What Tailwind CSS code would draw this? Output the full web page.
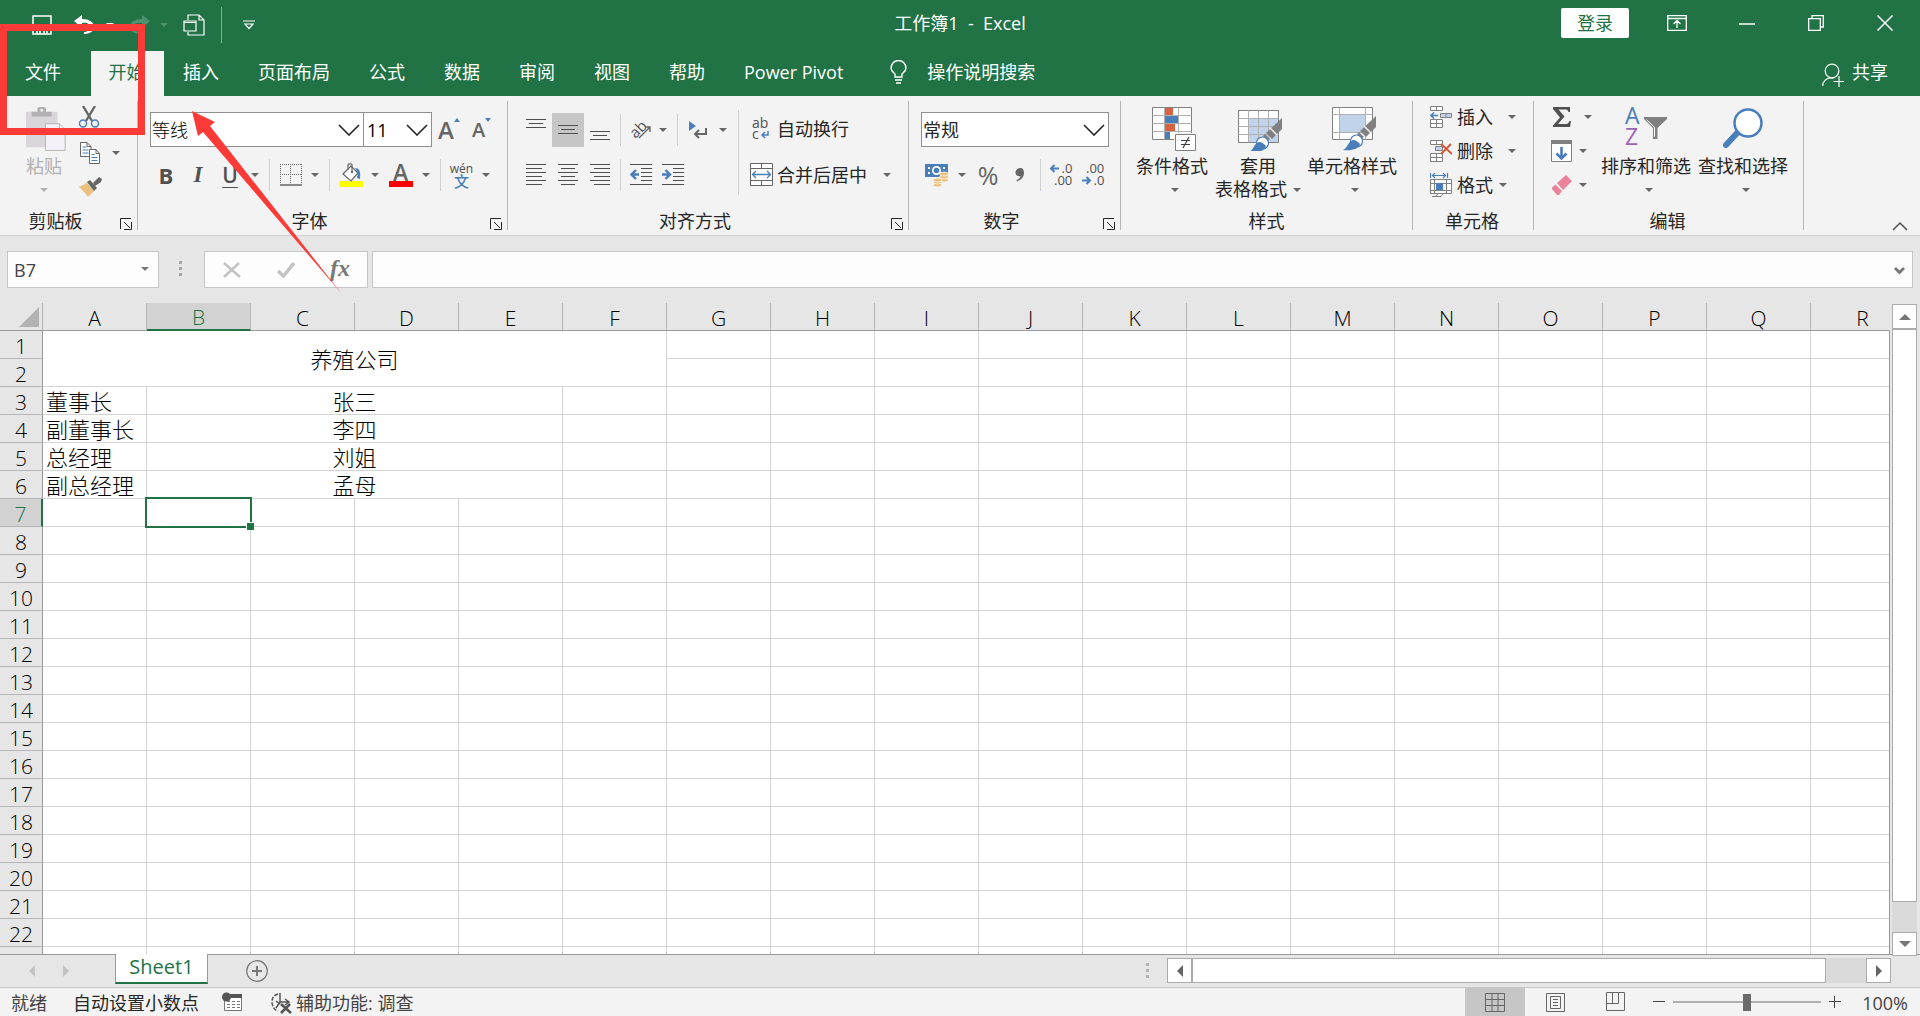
<!DOCTYPE html>
<html lang="zh-CN">
<head>
  <meta charset="UTF-8" />
  <meta name="viewport" content="width=device-width, initial-scale=1.0"/>
  <title>工作簿1 - Excel</title>
  <script src="https://cdn.jsdelivr.net/npm/@tailwindcss/browser@4"></script>
  <style>
    body {
      font-family: 'Open Sans', 'Noto Sans CJK SC', sans-serif;
    }
  </style>
</head>
<body class="relative h-screen flex flex-col overflow-hidden bg-[#e6e6e6] text-[18px] leading-6 text-[#262626]">

  <!-- Shared icons -->
  <svg class="hidden">
    <symbol id="caret" viewBox="0 0 8 4"><path d="M0 0h8L4 4z" fill="currentColor"/></symbol>
    <symbol id="chevron" viewBox="0 0 22 12"><path d="M1 1l10 10L21 1" fill="none" stroke="currentColor" stroke-width="1.6"/></symbol>
    <symbol id="launcher" viewBox="0 0 12 12"><path d="M.5 11V.5H11M4 4l6 6M11.500 4v7.500H4" fill="none" stroke="currentColor"/></symbol>
    <symbol id="brush" viewBox="0 0 33 36">
      <path d="M33 1v11L23 22l-6-6z" fill="#808080"/>
      <path d="M21 11l7 7" stroke="#f3f3f3" stroke-width="1.500"/>
      <path d="M16 17l5 5-2 2-5-5z" fill="#808080"/>
      <circle cx="13.500" cy="26" r="6" fill="#fff" stroke="#4a7ebb" stroke-width="1.200"/>
      <path d="M0 35c5-2 5-9 10-10 3 0 5 2 7 4-1 5-8 7-17 6z" fill="#4a7ebb"/>
    </symbol>
  </svg>

  <!-- Title bar -->
  <header class="relative h-[51px] shrink-0 flex items-start bg-[#217346] text-white">
    <div class="flex items-center h-[51px] pb-[1px] pl-8">
      <button aria-label="保存"><svg class="w-5 h-5" viewBox="0 0 20 20" fill="none" stroke="#fff" stroke-width="1.500"><path d="M1 1h18v18H1zM5 19v-4h10v4"/><path d="M8 16v3M12 16v3"/></svg></button>
      <button aria-label="撤消" class="ml-[22px]"><svg class="w-5 h-5" viewBox="0 0 20 20"><path d="M8 0L0 6l8 7V8c5-1 8 1 8 4 0 3-3 5-6 5v2c6 0 10-3 10-7 0-5-5-8-12-8z" fill="#fff"/></svg></button>
      <button aria-label="撤消选项" class="ml-3"><svg class="w-2 h-1"><use href="#caret"/></svg></button>
      <button aria-label="恢复" class="ml-4 text-[#4e9170]"><svg class="w-5 h-5" viewBox="0 0 20 20"><path d="M12 0l8 6-8 7V8c-5-1-8 1-8 4 0 3 3 5 6 5v2c-6 0-10-3-10-7 0-5 5-8 12-8z" fill="currentColor"/></svg></button>
      <button aria-label="恢复选项" class="ml-2.5 text-[#4e9170]"><svg class="w-2 h-1"><use href="#caret"/></svg></button>
      <button aria-label="切换窗口" class="ml-[15px]"><svg class="w-[22px] h-[22px]" viewBox="0 0 22 22" fill="none" stroke="#fff" stroke-width="1.200"><path d="M5 6V1h11l5 5v15H5v-3M16 1v5h5"/><path d="M1 7h12v10H1zM1 8.500h12"/></svg></button>
      <span class="w-px h-9 ml-4 bg-[#7fb096]"></span>
      <button aria-label="自定义快速访问工具栏" class="ml-[21px]"><svg class="w-3 h-[10px]" viewBox="0 0 12 10" fill="none" stroke="#fff" stroke-width="1.200"><path d="M0 1h12M2 4l4 4.500L10 4z"/></svg></button>
    </div>
    <h1 class="absolute inset-x-0 top-[11px] text-center whitespace-pre pointer-events-none">工作簿1  -  Excel</h1>
    <div class="ml-auto flex items-center h-[46px] pr-[27px]">
      <button class="w-[68px] h-[30px] rounded-xs bg-white text-[#217346]">登录</button>
      <button aria-label="功能区显示选项" class="ml-[38px]"><svg class="w-5 h-4" viewBox="0 0 20 16" fill="none" stroke="#fff" stroke-width="1.300"><path d="M.7.700h18.600v14.600H.7zM1 3.500h18M10 13V6M6.500 9L10 5.500 13.500 9"/></svg></button>
      <button aria-label="最小化" class="ml-[52px]"><svg class="w-4 h-4" viewBox="0 0 16 16" stroke="#fff" stroke-width="1.500"><path d="M0 9h16"/></svg></button>
      <button aria-label="向下还原" class="ml-[53px]"><svg class="w-4 h-4" viewBox="0 0 16 16" fill="none" stroke="#fff" stroke-width="1.300"><path d="M.7 3.700h11.600v11.600H.7zM4 3.500V.700h11.300V12H12.500"/></svg></button>
      <button aria-label="关闭" class="ml-[53px]"><svg class="w-4 h-4" viewBox="0 0 16 16" stroke="#fff" stroke-width="1.500"><path d="M.5.500l15 15M15.500.500l-15 15"/></svg></button>
    </div>
  </header>

  <!-- Ribbon tabs -->
  <nav class="h-[45px] shrink-0 flex bg-[#217346] text-white whitespace-nowrap">
    <button class="w-[91px] pl-[25px] pb-1 text-left">文件</button>
    <button class="w-[73px] pb-1 pr-0.5 bg-[#f3f3f3] text-[#217346]">开始</button>
    <div class="flex gap-px pb-1">
      <button class="px-[19px]">插入</button>
      <button class="px-[19px]">页面布局</button>
      <button class="px-[19px]">公式</button>
      <button class="px-[19px]">数据</button>
      <button class="px-[19px]">审阅</button>
      <button class="px-[19px]">视图</button>
      <button class="px-[19px]">帮助</button>
      <button class="px-[19px]">Power Pivot</button>
      <button class="pl-[27px] pr-6 flex items-center gap-5">
        <svg class="w-[17px] h-6" viewBox="0 0 17 24" fill="none" stroke="#fff" stroke-width="1.400"><path d="M5 17v-3C3 12 1 11 1 8a7.500 7.500 0 0 1 15 0c0 3-2 4-4 6v3zM5 20h7M6 23h5"/></svg>
        操作说明搜索
      </button>
    </div>
    <button class="ml-auto pr-8 pb-1 flex items-center gap-2">
      <svg class="w-[22px] h-6 mt-1.5" viewBox="0 0 22 24" fill="none" stroke="#fff" stroke-width="1.200"><circle cx="10" cy="8" r="6.800"/><path d="M.7 23c0-5 4-8 8-8h3M17 13v11M11.500 18.500H22"/></svg>
      共享
    </button>
  </nav>

  <!-- Ribbon -->
  <div class="h-[140px] shrink-0 flex bg-[#f3f3f3] border-b border-[#d0d0d0] whitespace-nowrap">

    <!-- Clipboard -->
    <section class="w-[137px] shrink-0 flex flex-col">
      <div class="flex-1 flex">
        <button class="w-12 ml-5 pt-[11px] flex flex-col items-center text-[#b1b1b1]">
          <svg class="w-[42px] h-[44px] ml-1 shrink-0" viewBox="0 0 42 46"><path d="M0 5h33v37H0z" fill="#d9d6d9"/><path d="M6 5h6V1l2-1h5l2 1v4h6v5H6z" fill="#b3b0b3"/><circle cx="16.500" cy="3.500" r="1.500" fill="#f3f3f3"/><path d="M20.500 17.500H35l6 6v22H20.500z" fill="#f5f1f8" stroke="#b5b2b5"/><path d="M35 17.500v6h6" fill="none" stroke="#b5b2b5"/></svg>
          <span class="mt-1 leading-[23px]">粘贴</span>
          <svg class="w-2 h-1 mt-2.5"><use href="#caret"/></svg>
        </button>
        <div class="pt-1 pl-2.5 flex flex-col text-[#666]">
          <button aria-label="剪切" class="h-[34px]"><svg class="w-[22px] h-[22px]" viewBox="0 0 22 22" fill="none"><path d="M5 0l9 15M17 0L8 15" stroke="#666" stroke-width="2.400"/><circle cx="5" cy="17.500" r="3.500" stroke="#4a7ebb" stroke-width="1.500"/><circle cx="17" cy="17.500" r="3.500" stroke="#4a7ebb" stroke-width="1.500"/></svg></button>
          <button aria-label="复制" class="h-[34px] pt-1 pl-0.5 flex items-center gap-3"><svg class="w-5 h-[22px]" viewBox="0 0 20 22" stroke="#666"><path d="M.5.500H7l4 4v10H.5z" fill="#fff"/><path d="M2.500 5h4M2.500 8h6M2.500 11h6" stroke="#4a7ebb"/><path d="M9.500 7.500H16l3.500 4v10h-10z" fill="#fff"/><path d="M7 .5v4h4M16 7.500v4h3.500" fill="none"/><path d="M11.500 12.500h3M11.500 15.500h6M11.500 18.500h6" stroke="#4a7ebb"/></svg><svg class="w-2 h-1"><use href="#caret"/></svg></button>
          <button aria-label="格式刷" class="h-[34px] pt-1"><svg class="w-6 h-5" viewBox="0 0 24 20"><path d="M1 10l8-4 7 8-6 6C8 16 4 13 1 10z" fill="#e9c07c"/><path d="M9 5l3-2 7 8-3 3z" fill="#666"/><path d="M15 6l6-6 3 2-1 3-6 4z" fill="#666"/></svg></button>
        </div>
      </div>
      <div class="relative h-[26px] text-center pr-[26px]">剪贴板<button aria-label="剪贴板设置" class="absolute right-[5px] top-[9px]"><svg class="w-3 h-3"><use href="#launcher"/></svg></button></div>
    </section>
    <span class="w-px my-[5px] shrink-0 bg-[#b5b5b5]"></span>

    <!-- Font -->
    <section class="w-[369px] shrink-0 flex flex-col">
      <div class="flex-1 pl-3 pt-4 flex flex-col gap-3 text-[#666]">
        <div class="h-[35px] -mb-px flex">
          <div class="relative w-[214px]">
            <select aria-label="字体" class="appearance-none w-full h-full pl-px bg-white border border-[#8f8f8f] text-black font-light"><option>等线</option></select>
            <svg class="absolute right-1 top-3 w-[22px] h-3 text-[#262626] pointer-events-none"><use href="#chevron"/></svg>
          </div>
          <div class="relative w-[69px] -ml-px">
            <select aria-label="字号" class="appearance-none w-full h-full pl-[3px] bg-white border border-[#8f8f8f] text-black"><option>11</option></select>
            <svg class="absolute right-1 top-3 w-[22px] h-3 text-[#262626] pointer-events-none"><use href="#chevron"/></svg>
          </div>
          <button aria-label="增大字号" class="ml-1.5 flex items-start text-[24px] leading-9 font-semibold">A<svg class="w-1.5 h-1 mt-1.5" viewBox="0 0 6 4"><path d="M0 4h6L3 0z" fill="#4a7ebb"/></svg></button>
          <button aria-label="减小字号" class="ml-3 flex items-start text-[20px] leading-9 font-semibold">A<svg class="w-1.5 h-1 mt-1.5" viewBox="0 0 6 4"><path d="M0 0h6L3 4z" fill="#4a7ebb"/></svg></button>
        </div>
        <div class="h-[34px] flex items-center">
          <button class="w-8 text-[22px] font-bold text-[#505050]">B</button>
          <button class="w-8 text-[23px] font-bold italic text-[#505050] font-['Liberation_Serif']">I</button>
          <button class="w-8 text-[21px] font-semibold underline decoration-1 underline-offset-4 text-[#505050]">U</button>
          <button aria-label="下划线样式" class="w-[18px] flex justify-center"><svg class="w-2 h-1"><use href="#caret"/></svg></button>
          <span class="w-px h-8 mx-[5px] bg-[#d0d0d0]"></span>
          <button aria-label="边框" class="w-[31px] flex justify-center"><svg class="w-[22px] h-[22px]" viewBox="0 0 22 22" fill="none" stroke="#666"><path d="M0 .5h22M0 10.500h22M.5 0v20M10.500 0v20M21.500 0v20" stroke-dasharray="1 1"/><path d="M0 21h22" stroke-width="1.500"/></svg></button>
          <button aria-label="边框样式" class="w-[18px] flex justify-center"><svg class="w-2 h-1"><use href="#caret"/></svg></button>
          <span class="w-px h-8 mx-[5px] bg-[#d0d0d0]"></span>
          <button aria-label="填充颜色" class="w-[31px] flex justify-center"><svg class="w-6 h-6" viewBox="0 0 24 24"><path d="M0 18h24v6H0z" fill="#ff0"/><path d="M4 11l8-8 7 7-7 8z" fill="#fff" stroke="#666" stroke-width="1.200"/><path d="M9 7V1.500c0-1 4-1 4 0V9" fill="none" stroke="#666" stroke-width="1.200"/><circle cx="13" cy="9" r="1.200" fill="#666"/><path d="M16 5c4 0 6 3 5 11l-3-1 1-5z" fill="#4a7ebb"/></svg></button>
          <button aria-label="填充颜色选项" class="w-[18px] flex justify-center"><svg class="w-2 h-1"><use href="#caret"/></svg></button>
          <button aria-label="字体颜色" class="w-[33px] flex flex-col items-center text-[23px] leading-[18px] font-semibold">A<span class="w-6 h-1.5 bg-[#f00]"></span></button>
          <button aria-label="字体颜色选项" class="w-[18px] flex justify-center"><svg class="w-2 h-1"><use href="#caret"/></svg></button>
          <span class="w-px h-8 mx-[5px] bg-[#d0d0d0]"></span>
          <button class="w-[31px] flex flex-col items-center text-[12px] leading-[11px] font-medium text-[#505050]">wén<span class="text-[15px] leading-[14px] text-[#4a7ebb]">文</span></button>
          <button aria-label="拼音选项" class="w-[18px] flex justify-center"><svg class="w-2 h-1"><use href="#caret"/></svg></button>
        </div>
      </div>
      <div class="relative h-[26px] text-center pr-[26px]">字体<button aria-label="字体设置" class="absolute right-[5px] top-[9px]"><svg class="w-3 h-3"><use href="#launcher"/></svg></button></div>
    </section>
    <span class="w-px my-[5px] shrink-0 bg-[#b5b5b5]"></span>

    <!-- Alignment -->
    <section class="w-[400px] shrink-0 flex flex-col">
      <div class="flex-1 pl-3 flex text-[#666]">
        <div class="pt-[17px] flex flex-col gap-3">
          <div class="h-[34px] -mb-px flex items-center">
            <button aria-label="顶端对齐" class="w-8 h-[34px] flex justify-center items-center"><svg class="w-5 h-6" viewBox="0 0 20 24" stroke="#505050"><path d="M0 1.500h20M3 5.500h14M0 9.500h20"/></svg></button>
            <button aria-label="垂直居中" class="w-8 h-[34px] flex justify-center items-center bg-[#c6c6c6]"><svg class="w-5 h-6" viewBox="0 0 20 24" stroke="#505050"><path d="M0 7.500h20M3 11.500h14M0 15.500h20"/></svg></button>
            <button aria-label="底端对齐" class="w-8 h-[34px] flex justify-center items-center"><svg class="w-5 h-6" viewBox="0 0 20 24" stroke="#505050"><path d="M0 13.500h20M3 17.500h14M0 21.500h20"/></svg></button>
            <span class="w-px h-8 mx-1 bg-[#d0d0d0]"></span>
            <button aria-label="方向" class="w-[47px] flex items-center gap-1.5 pl-1"><svg class="w-6 h-6" viewBox="0 0 24 24"><text x="2" y="18" transform="rotate(-45 8 14)" font-size="15" font-weight="500" fill="#505050">ab</text><path d="M10 20L21 9M16 9h5v5" fill="none" stroke="#666" stroke-width="1.400"/></svg><svg class="w-2 h-1"><use href="#caret"/></svg></button>
            <span class="w-px h-8 mx-[5px] bg-[#d0d0d0]"></span>
            <button aria-label="文字方向" class="w-[50px] flex items-center gap-3 pl-1.5"><svg class="w-[18px] h-[18px]" viewBox="0 0 18 18"><path d="M0 0l7 5-7 5z" fill="#4a7ebb"/><path d="M17 7v6H6M10 9l-4 4 4 4" fill="none" stroke="#666" stroke-width="2"/></svg><svg class="w-2 h-1"><use href="#caret"/></svg></button>
          </div>
          <div class="h-[34px] flex items-center">
            <button aria-label="左对齐" class="w-8 flex justify-center"><svg class="w-5 h-[22px]" viewBox="0 0 20 22" stroke="#505050"><path d="M0 .5h20M0 4.500h16M0 8.500h20M0 12.500h16M0 16.500h20M0 20.500h16"/></svg></button>
            <button aria-label="居中" class="w-8 flex justify-center"><svg class="w-5 h-[22px]" viewBox="0 0 20 22" stroke="#505050"><path d="M0 .5h20M3 4.500h14M0 8.500h20M3 12.500h14M0 16.500h20M3 20.500h14"/></svg></button>
            <button aria-label="右对齐" class="w-8 flex justify-center"><svg class="w-5 h-[22px]" viewBox="0 0 20 22" stroke="#505050"><path d="M0 .5h20M4 4.500h16M0 8.500h20M4 12.500h16M0 16.500h20M4 20.500h16"/></svg></button>
            <span class="w-px h-8 mx-1 bg-[#d0d0d0]"></span>
            <button aria-label="减少缩进量" class="w-8 flex justify-center"><svg class="w-[22px] h-[22px]" viewBox="0 0 22 22" fill="none" stroke="#505050"><path d="M0 .5h22M11 4.500h11M11 8.500h11M11 12.500h11M11 16.500h11M0 20.500h22"/><path d="M9 10.500H2M6 6l-4.500 4.500L6 15" stroke="#4a7ebb" stroke-width="2.400"/></svg></button>
            <button aria-label="增加缩进量" class="w-8 flex justify-center"><svg class="w-[22px] h-[22px]" viewBox="0 0 22 22" fill="none" stroke="#505050"><path d="M0 .5h22M11 4.500h11M11 8.500h11M11 12.500h11M11 16.500h11M0 20.500h22"/><path d="M0 10.500h7M3.500 6L8 10.500 3.500 15" stroke="#4a7ebb" stroke-width="2.400"/></svg></button>
          </div>
        </div>
        <span class="w-px h-[85px] mt-3.5 ml-[5px] mr-2.5 bg-[#d0d0d0]"></span>
        <div class="pt-4 flex flex-col gap-3">
          <button class="h-[34px] flex items-center gap-1">
            <svg class="w-6 h-6" viewBox="0 0 24 24"><text x="3" y="11" font-size="14" fill="#505050">ab</text><text x="3" y="22" font-size="14" fill="#505050">c</text><path d="M19 14v4h-6M16 15l-3 3 3 3" fill="none" stroke="#4a7ebb" stroke-width="1.500"/></svg>
            <span class="text-[#262626]">自动换行</span>
          </button>
          <button class="h-[34px] flex items-center gap-1">
            <svg class="w-6 h-6" viewBox="0 0 24 24" fill="#fff" stroke="#666"><path d="M1.500.500h22v22h-22z"/><path d="M1.500 5.500h22M1.500 17.500h22M12.500.500v5M12.500 17.500v5"/><path d="M3.500 11.500h18M7 8l-3.500 3.500L7 15M18 8l3.500 3.500L18 15" fill="none" stroke="#4a7ebb" stroke-width="1.300"/></svg>
            <span class="text-[#262626]">合并后居中</span>
            <svg class="w-2 h-1 ml-3"><use href="#caret"/></svg>
          </button>
        </div>
      </div>
      <div class="relative h-[26px] text-center pr-[26px]">对齐方式<button aria-label="对齐设置" class="absolute right-[5px] top-[9px]"><svg class="w-3 h-3"><use href="#launcher"/></svg></button></div>
    </section>
    <span class="w-px my-[5px] shrink-0 bg-[#b5b5b5]"></span>

    <!-- Number -->
    <section class="w-[211px] shrink-0 flex flex-col">
      <div class="flex-1 pl-3 pr-[11px] pt-4 flex flex-col gap-3 text-[#666]">
        <div class="relative h-[35px] -mb-px">
          <select aria-label="数字格式" class="appearance-none w-full h-full pl-px bg-white border border-[#8f8f8f] text-[#262626]"><option>常规</option></select>
          <svg class="absolute right-1 top-3 w-[22px] h-3 text-[#262626] pointer-events-none"><use href="#chevron"/></svg>
        </div>
        <div class="h-[34px] flex items-center">
          <button aria-label="会计数字格式" class="w-[31px] flex justify-center"><svg class="w-6 h-6" viewBox="0 0 24 24"><path d="M0 1h23v13H0z" fill="#4a7ebb"/><path d="M3 4h2v2H3zM18 4h2v2h-2zM3 9h2v2H3z" fill="#fff"/><circle cx="11.500" cy="7.500" r="4.500" fill="#fff"/><circle cx="11.500" cy="7.500" r="2.800" fill="#4a7ebb"/><g fill="#e9c07c" stroke="#fff" stroke-width=".7"><ellipse cx="19" cy="17" rx="4.500" ry="2"/><ellipse cx="19" cy="14" rx="4.500" ry="2"/><ellipse cx="19" cy="11" rx="4.500" ry="2"/><ellipse cx="12.500" cy="22" rx="4.500" ry="2"/><ellipse cx="12.500" cy="19" rx="4.500" ry="2"/><ellipse cx="12.500" cy="17" rx="4.500" ry="2"/></g></svg></button>
          <button aria-label="会计数字格式选项" class="w-5 flex justify-center"><svg class="w-2 h-1"><use href="#caret"/></svg></button>
          <button class="w-8 text-[25px]">%</button>
          <button aria-label="千位分隔样式" class="w-8 flex justify-center"><svg class="w-2.5 h-3.5" viewBox="0 0 10 14"><path d="M5 0c3 0 4 2 4 5 0 4-3 7-7 8.500L1.500 12C4 11 5.500 9.500 5.500 8 2.500 9 .5 7 .5 4.500.5 2 2.500 0 5 0z" fill="#666"/></svg></button>
          <span class="w-px h-8 mx-1 bg-[#d0d0d0]"></span>
          <button aria-label="增加小数位数" class="w-8 flex justify-center"><svg class="w-6 h-6" viewBox="0 0 24 24" font-size="13" fill="#505050"><text x="12.500" y="10">.0</text><text x="5" y="22">.00</text><path d="M10 5.500H2M5.500 2L2 5.500 5.500 9" fill="none" stroke="#4a7ebb" stroke-width="2"/></svg></button>
          <button aria-label="减少小数位数" class="w-8 flex justify-center"><svg class="w-6 h-6" viewBox="0 0 24 24" font-size="13" fill="#505050"><text x="5" y="10">.00</text><text x="12.500" y="22">.0</text><path d="M1 17.500h8M5.500 14L9 17.500 5.500 21" fill="none" stroke="#4a7ebb" stroke-width="2"/></svg></button>
        </div>
      </div>
      <div class="relative h-[26px] text-center pr-[26px]">数字<button aria-label="数字设置" class="absolute right-[5px] top-[9px]"><svg class="w-3 h-3"><use href="#launcher"/></svg></button></div>
    </section>
    <span class="w-px my-[5px] shrink-0 bg-[#b5b5b5]"></span>

    <!-- Styles -->
    <section class="w-[291px] shrink-0 flex flex-col">
      <div class="flex-1 pl-[11px] pt-[11px] flex items-start leading-[23px]">
        <button class="w-20 flex flex-col items-center">
          <svg class="w-11 h-11 ml-1" viewBox="0 0 44 44"><path d="M.5.500h39v32H.5z" fill="#fff" stroke="#808080"/><path d="M.5 8.500h39M.5 16.500h39M.5 24.500h39M12.500.500v32M26.500.500v32" stroke="#b0b0b0"/><path d="M13 1h8v7h-8zM13 17h10v7H13z" fill="#d8623f"/><path d="M13 9h13v7H13zM13 25h5v7h-5z" fill="#4a7ebb"/><path d="M22 26h23v19H22z" fill="#f3f3f3"/><path d="M23.500 27.500h20v16h-20z" fill="#fff" stroke="#808080"/><path d="M29 33.500h9M29 37.500h9M37 30l-6 11" stroke="#404040" stroke-width="1.200"/></svg>
          <span class="mt-1">条件格式</span>
          <svg class="w-2 h-1 mt-2.5 ml-1.5 text-[#666]"><use href="#caret"/></svg>
        </button>
        <button class="w-[92px] flex flex-col items-center">
          <svg class="w-11 h-11 ml-1" viewBox="0 0 44 44"><path d="M.5 3.500h40v32H.5z" fill="#fff" stroke="#808080"/><path d="M11 12h29v23H11z" fill="#c1d3ea"/><path d="M.5 11.500h40M.5 19.500h40M.5 27.500h40M10.500 3.500v32M20.500 3.500v32M30.500 3.500v32" stroke="#b0b0b0"/><use href="#brush" x="11" y="10" width="33" height="36"/></svg>
          <span class="mt-1">套用</span>
          <span class="flex items-center gap-1.5">表格格式<svg class="w-2 h-1 text-[#666]"><use href="#caret"/></svg></span>
        </button>
        <button class="w-24 flex flex-col items-center">
          <svg class="w-11 h-11 ml-1" viewBox="0 0 44 44"><path d="M.5.500h40v32H.5z" fill="#fff" stroke="#808080"/><path d="M7.500.500v32M33.500.500v32M.5 7.500h40M.5 25.500h40" stroke="#b0b0b0"/><path d="M8 8h25v17H8z" fill="#c1d3ea"/><use href="#brush" x="11" y="8" width="33" height="36"/></svg>
          <span class="mt-1">单元格样式</span>
          <svg class="w-2 h-1 mt-2.5 ml-1.5 text-[#666]"><use href="#caret"/></svg>
        </button>
      </div>
      <div class="h-[26px] text-center">样式</div>
    </section>
    <span class="w-px my-[5px] shrink-0 bg-[#b5b5b5]"></span>

    <!-- Cells -->
    <section class="w-[120px] shrink-0 flex flex-col">
      <div class="flex-1 pl-[17px] pt-1 flex flex-col">
        <button class="h-[34px] flex items-center gap-[5px]">
          <svg class="w-[22px] h-[22px]" viewBox="0 0 22 22" fill="#fff" stroke="#808080"><path d="M.5.500h12v4H.5zM6.500.500v4M.5 13.500h12v8H.5zM6.500 13.500v8M.5 17.500h12"/><path d="M10.500 7.500h11v4h-11zM16 7.500v4" fill="#c1d3ea"/><path d="M8 9.500H1M4 6.500l-3 3 3 3" fill="none" stroke="#4a7ebb" stroke-width="1.600"/></svg>
          插入
          <svg class="w-2 h-1 ml-2.5 text-[#666]"><use href="#caret"/></svg>
        </button>
        <button class="h-[34px] flex items-center gap-[5px]">
          <svg class="w-[22px] h-[22px]" viewBox="0 0 22 22" fill="#fff" stroke="#808080"><path d="M.5.500h12v4H.5zM6.500.500v4M.5 13.500h12v8H.5zM6.500 13.500v8M.5 17.500h12"/><path d="M5.500 6.500h7v4h-7z" fill="#c1d3ea"/><path d="M11 4l11 10M21 4L11 14" fill="none" stroke="#d8532f" stroke-width="1.800"/></svg>
          删除
          <svg class="w-2 h-1 ml-2.5 text-[#666]"><use href="#caret"/></svg>
        </button>
        <button class="h-[34px] flex items-center gap-[5px]">
          <svg class="w-[22px] h-6" viewBox="0 0 22 24" fill="#fff" stroke="#808080"><path d="M.5 6.500h21v14H.5zM4.500 6.500v14M16.500 6.500v14M.5 10.500h21M.5 17.500h21"/><path d="M6 10h7v7H6z" fill="#4a7ebb" stroke="none"/><path d="M2 23.500h4l2-3h5l-2 3z"/><path d="M.5 0v5M17.500 0v5M2 2.500h14M5 0L2.500 2.500 5 5M13 0l2.500 2.500L13 5" fill="none" stroke="#4a7ebb" stroke-width="1.200"/></svg>
          格式
          <svg class="w-2 h-1 ml-px text-[#666]"><use href="#caret"/></svg>
        </button>
      </div>
      <div class="h-[26px] text-center pr-0.5">单元格</div>
    </section>
    <span class="w-px my-[5px] shrink-0 bg-[#b5b5b5]"></span>

    <!-- Editing -->
    <section class="w-[269px] shrink-0 flex flex-col">
      <div class="flex-1 pl-4 flex items-start leading-[23px]">
        <div class="pt-1 w-[50px] flex flex-col text-[#666]">
          <button aria-label="自动求和" class="h-[34px] flex items-center gap-2.5"><svg class="w-6 h-5" viewBox="0 0 24 20"><path d="M3 0h17v5h-1.500C18 3 17 2.500 15 2.500H8.500l6 7L8 17h7c2.500 0 3.500-.5 4.500-3H21l-1 6H3v-1.500L10 10.500 3 2z" fill="#505050"/></svg><svg class="w-2 h-1"><use href="#caret"/></svg></button>
          <button aria-label="填充" class="h-[34px] flex items-center gap-[5px]"><svg class="w-6 h-[22px]" viewBox="0 0 24 22"><path d="M1.500.500h20v21h-20z" fill="#fff" stroke="#808080"/><path d="M1 0h21v4H1z" fill="#808080"/><path d="M11.500 7v11M6.500 13.500l5 5 5-5" fill="none" stroke="#4a7ebb" stroke-width="2.600"/></svg><svg class="w-2 h-1"><use href="#caret"/></svg></button>
          <button aria-label="清除" class="h-[34px] flex items-center gap-[5px]"><svg class="w-6 h-5" viewBox="0 0 24 20"><path d="M7 8l9-8 6 6-9 9zM5.500 9.500L12 16l-3 4h-2l-5-6v-1.500z" fill="#e8839b"/></svg><svg class="w-2 h-1"><use href="#caret"/></svg></button>
        </div>
        <button class="w-[92px] pt-[11px] flex flex-col items-center">
          <svg class="w-11 h-11" viewBox="0 0 44 44"><text x="1" y="17" font-size="23" font-weight="500" fill="#4a7ebb">A</text><text x="1" y="38" font-size="23" font-weight="500" fill="#9b64b8">Z</text><path d="M20 10h23v2L33.500 21v11h-4.500V21L20 12z" fill="#808080"/><path d="M22.500 12.500l8 8V30" fill="none" stroke="#fff"/></svg>
          <span class="mt-1">排序和筛选</span>
          <svg class="w-2 h-1 mt-2.5 ml-1.5 text-[#666]"><use href="#caret"/></svg>
        </button>
        <button class="ml-[5px] w-[92px] pt-[11px] flex flex-col items-center">
          <svg class="w-11 h-11" viewBox="0 0 44 44"><path d="M18 24L5 38" stroke="#4a7ebb" stroke-width="6" stroke-linecap="round"/><circle cx="27" cy="16" r="13.500" fill="#fff" stroke="#4a7ebb" stroke-width="2.500"/></svg>
          <span class="mt-1">查找和选择</span>
          <svg class="w-2 h-1 mt-2.5 ml-1.5 text-[#666]"><use href="#caret"/></svg>
        </button>
      </div>
      <div class="h-[26px] text-center pr-0.5">编辑</div>
    </section>
    <span class="w-px my-[5px] shrink-0 bg-[#b5b5b5]"></span>
    <button aria-label="折叠功能区" class="ml-auto mr-3 mb-1 self-end"><svg class="w-4 h-[10px]" viewBox="0 0 16 10" fill="none" stroke="#505050" stroke-width="1.500"><path d="M1 9l7-7 7 7"/></svg></button>
  </div>

  <!-- Formula bar -->
  <div class="h-[67px] shrink-0 flex pt-[15px] pl-[7px] pr-[7px]">
    <div class="relative w-[152px] h-[37px]">
      <input id="nameBox" aria-label="名称框" value="B7" class="w-full h-full pl-1.5 bg-[#fdfdfd] border border-[#c6c6c6] text-[#444] outline-none" />
      <svg class="absolute right-2.5 top-4 w-2 h-1 text-[#777] pointer-events-none"><use href="#caret"/></svg>
    </div>
    <svg class="w-[3px] h-[15px] mt-2.5 mx-5" viewBox="0 0 3 15" fill="#a6a6a6"><path d="M0 0h3v3H0zM0 6h3v3H0zM0 12h3v3H0z"/></svg>
    <div class="w-[164px] h-[37px] ml-0.5 flex items-center bg-[#fdfdfd] border border-[#c6c6c6]">
      <button aria-label="取消" class="w-[54px] flex justify-center"><svg class="w-[18px] h-4" viewBox="0 0 18 16" stroke="#c3c3c3" stroke-width="2.500"><path d="M1 1l16 14M16 1L1 15"/></svg></button>
      <button aria-label="输入" class="w-[54px] flex justify-center"><svg class="w-[18px] h-4" viewBox="0 0 18 16" fill="none" stroke="#c3c3c3" stroke-width="3.500"><path d="M1 9l5.500 5L17 1"/></svg></button>
      <button class="w-[54px] pb-1 text-[24px] italic font-semibold text-[#777] font-['Liberation_Serif']">fx</button>
    </div>
    <div class="relative flex-1 h-[37px] ml-1">
      <input aria-label="编辑栏" class="w-full h-full px-2 bg-[#fdfdfd] border border-[#c6c6c6] outline-none" />
      <svg class="absolute right-2 top-4 w-[11px] h-2 pointer-events-none" viewBox="0 0 11 8" fill="none" stroke="#777" stroke-width="2.800"><path d="M1 1l4.500 4.500L10 1"/></svg>
    </div>
  </div>

  <!-- Sheet -->
  <main class="flex-1 min-h-0 flex">
    <div class="relative flex-1 min-w-0 overflow-hidden after:absolute after:top-[27px] after:bottom-0 after:right-0 after:w-px after:bg-[#999]">
      <table class="table-fixed w-[1915px] border-separate border-spacing-0 text-[21px] leading-6 text-black font-light">
        <thead><tr id="sheetHead"></tr></thead>
        <tbody id="sheetBody"></tbody>
      </table>
    </div>
    <div class="relative z-10 w-[25px] ml-0.5 mr-[3px] -mb-0.5 pt-px flex flex-col">
      <button aria-label="向上滚动" class="h-[25px] flex justify-center items-center bg-white border border-[#ababab]"><svg class="w-3 h-1.5" viewBox="0 0 12 6"><path d="M0 6h12L6 0z" fill="#777"/></svg></button>
      <div class="flex-1 bg-[#dadada]"><div class="h-[95%] bg-white border border-[#ababab]"></div></div>
      <button aria-label="向下滚动" class="h-6 flex justify-center items-center bg-white border border-[#ababab]"><svg class="w-3 h-1.5" viewBox="0 0 12 6"><path d="M0 0h12L6 6z" fill="#777"/></svg></button>
    </div>
  </main>

  <!-- Sheet tabs -->
  <div class="h-[34px] shrink-0 flex items-start border-t border-t-[#999] border-b border-b-[#c6c6c6]">
    <button aria-label="上一个工作表" class="ml-[29px] mt-2.5"><svg class="w-1.5 h-3" viewBox="0 0 6 12"><path d="M6 0v12L0 6z" fill="#c3c3c3"/></svg></button>
    <button aria-label="下一个工作表" class="ml-7 mt-2.5"><svg class="w-1.5 h-3" viewBox="0 0 6 12"><path d="M0 0v12l6-6z" fill="#c3c3c3"/></svg></button>
    <button class="-mt-px ml-[46px] w-[93px] h-[30px] pb-0.5 bg-white border-x border-x-[#999] border-b-2 border-b-[#217346] text-[20px] leading-6 font-medium text-[#217346]">Sheet1</button>
    <button aria-label="新工作表" class="ml-[38px] mt-[5px]"><svg class="w-[22px] h-[22px]" viewBox="0 0 22 22" fill="none" stroke="#777"><circle cx="11" cy="11" r="10.300" stroke-width="1.200"/><path d="M11 6v10M6 11h10" stroke-width="2"/></svg></button>
    <svg class="w-[3px] h-[15px] mt-2 ml-auto mr-[18px]" viewBox="0 0 3 15" fill="#b5b5b5"><path d="M0 0h3v3H0zM0 6h3v3H0zM0 12h3v3H0z"/></svg>
    <div class="w-[724px] h-[25px] mt-[3px] mr-[29px] flex">
      <button aria-label="向左滚动" class="w-[25px] flex justify-center items-center bg-white border border-[#ababab]"><svg class="w-1.5 h-3" viewBox="0 0 6 12"><path d="M6 0v12L0 6z" fill="#666"/></svg></button>
      <div class="flex-1 bg-[#dadada]"><div class="w-[94%] h-full bg-white border border-[#ababab]"></div></div>
      <button aria-label="向右滚动" class="w-[25px] flex justify-center items-center bg-white border border-[#ababab]"><svg class="w-1.5 h-3" viewBox="0 0 6 12"><path d="M0 0v12l6-6z" fill="#666"/></svg></button>
    </div>
  </div>

  <!-- Status bar -->
  <footer class="h-7 shrink-0 flex items-center bg-[#f3f3f3] pl-[11px] pr-3 whitespace-nowrap text-[#444]">
    <span class="pt-0.5">就绪</span>
    <span class="ml-[26px] pt-0.5 text-[#262626]">自动设置小数点</span>
    <button aria-label="宏录制" class="ml-[23px]"><svg class="w-5 h-5" viewBox="0 0 20 20"><path d="M2.500 4.500h17v14h-17z" fill="#fff" stroke="#777"/><path d="M8 2h12v4H8z" fill="#555"/><circle cx="4.500" cy="5" r="4.500" fill="#555"/><path d="M5 9.500h3M10 9.500h3M15 9.500h3M5 12.500h3M10 12.500h3M15 12.500h3M5 15.500h3M10 15.500h3M15 15.500h3" stroke="#777"/></svg></button>
    <button class="ml-[29px] pt-0.5 flex items-center gap-1"><svg class="w-[21px] h-[21px]" viewBox="0 0 21 21" fill="none" stroke="#555" stroke-width="1.500"><path d="M7 1C3 2 1 5 1 9s2 8 6 9" stroke-dasharray="4 1.500"/><path d="M9 0v9h9M14 6l4 3-4 3M5 8l4 3M9 9l-4 6"/><path d="M10 11l10 9M19 11l-9 9" stroke-width="2.600"/></svg>辅助功能: 调查</button>
    <div class="ml-auto h-7 flex items-center">
      <button aria-label="普通" class="w-[60px] h-7 flex justify-center items-center bg-[#c6c6c6]"><svg class="w-5 h-[19px]" viewBox="0 0 20 19" fill="none" stroke="#666"><path d="M.5.500h19v18H.5zM7 .5v18M13 .5v18M.5 6.500h19M.5 12.500h19"/></svg></button>
      <button aria-label="页面布局" class="w-[60px] h-7 flex justify-center items-center"><svg class="w-[19px] h-[19px]" viewBox="0 0 19 19" fill="none" stroke="#666"><path d="M.5.500h18v18H.5zM4.500 3.500h10v12h-10zM7 6.500h5M7 9.500h5M7 12.500h5"/></svg></button>
      <button aria-label="分页预览" class="w-[60px] h-7 pb-px flex justify-center items-center"><svg class="w-[19px] h-[19px]" viewBox="0 0 19 19" fill="none" stroke="#666"><path d="M.5.500h18v18H.5zM.5 11.500h12v-11M6.500.500v11"/></svg></button>
      <button aria-label="缩小" class="ml-2"><svg class="w-3 h-3" viewBox="0 0 12 12" stroke="#444"><path d="M0 5.500h12"/></svg></button>
      <input type="range" min="10" max="190" value="100" aria-label="缩放" class="appearance-none w-[148px] h-[17px] mx-2 bg-transparent bg-[linear-gradient(#b0b0b0,#b0b0b0)] bg-[length:100%_2px] bg-center bg-no-repeat [&::-webkit-slider-thumb]:appearance-none [&::-webkit-slider-thumb]:w-2 [&::-webkit-slider-thumb]:h-[17px] [&::-webkit-slider-thumb]:bg-[#6b6b6b]" />
      <button aria-label="放大"><svg class="w-3 h-3" viewBox="0 0 12 12" stroke="#444"><path d="M0 5.500h12M5.500 0v12"/></svg></button>
      <button class="w-[49px] ml-[18px] pt-0.5 text-right">100%</button>
    </div>
  </footer>

  <!-- Red marker and arrow -->
  <div class="absolute left-0 top-6 w-[145px] h-[111px] border-7 border-[#fc3a38] pointer-events-none"></div>
  <svg class="absolute left-48 top-[111px] w-[150px] h-[182px] pointer-events-none" viewBox="0 0 150 182"><path d="M0 0l23 11-5 4 131 167L11 21l-5 4z" fill="#fc3a38"/></svg>

  <script>
    const head = document.getElementById("sheetHead");
    const body = document.getElementById("sheetBody");

    const columns = "ABCDEFGHIJKLMNOPQR".split("");
    const rowCount = 23;
    const active = { col: "B", row: 7 };

    const staff = {
      3: ["董事长", "张三"],
      4: ["副董事长", "李四"],
      5: ["总经理", "刘姐"],
      6: ["副总经理", "孟母"]
    };

    const emptyCell = `<td class="border-r border-b border-[#d4d4d4] bg-white"></td>`;

    // Column letters
    head.innerHTML = `
      <th class="w-[43px] h-7 p-0 border-r border-r-[#b5b5b5] border-b border-b-[#999]">
        <svg class="w-5 h-5 ml-[19px]" viewBox="0 0 20 20"><path d="M20 0v20H0z" fill="#b3b3b3"/></svg>
      </th>` +
      columns.map(col => col === active.col
        ? `<th class="w-[104px] h-7 p-0 pt-0.5 font-light bg-[#d2d2d2] text-[#217346] border-r border-r-[#b5b5b5] border-b-2 border-b-[#217346]">${col}</th>`
        : `<th class="w-[104px] h-7 p-0 pt-0.5 font-light border-r border-r-[#b5b5b5] border-b border-b-[#999]">${col}</th>`
      ).join("");

    // Rows
    for (let row = 1; row <= rowCount; row++) {
      let html = row === active.row
        ? `<th class="h-7 p-0 pt-0.5 font-light bg-[#d2d2d2] text-[#217346] border-r-2 border-r-[#217346] border-b border-b-[#b5b5b5]">${row}</th>`
        : `<th class="h-7 p-0 pt-0.5 font-light border-r border-r-[#999] border-b border-b-[#b5b5b5]">${row}</th>`;

      if (row === 1) {
        html += `<td colspan="6" rowspan="2" class="p-0 text-center bg-white border-r border-b border-[#d4d4d4] text-[22px]">养殖公司</td>` + emptyCell.repeat(12);
      } else if (row === 2) {
        html += emptyCell.repeat(12);
      } else if (staff[row]) {
        html += `<td class="p-0 pl-[3px] bg-white border-r border-b border-[#d4d4d4] text-[22px] whitespace-nowrap">${staff[row][0]}</td>
          <td colspan="4" class="p-0 text-center bg-white border-r border-b border-[#d4d4d4] text-[22px]">${staff[row][1]}</td>` + emptyCell.repeat(13);
      } else if (row === active.row) {
        html += emptyCell + `
          <td class="relative border-r border-b border-[#d4d4d4] bg-white">
            <div class="absolute -left-0.5 -right-0.5 -top-0.5 -bottom-0.5 border-2 border-[#217346]"></div>
            <div class="absolute -right-1 -bottom-1 w-2 h-2 border-t border-l border-white bg-[#217346]"></div>
          </td>` + emptyCell.repeat(16);
      } else {
        html += emptyCell.repeat(18);
      }

      const tr = document.createElement("tr");
      tr.innerHTML = html;
      body.appendChild(tr);
    }
  </script>

</body>
</html>
